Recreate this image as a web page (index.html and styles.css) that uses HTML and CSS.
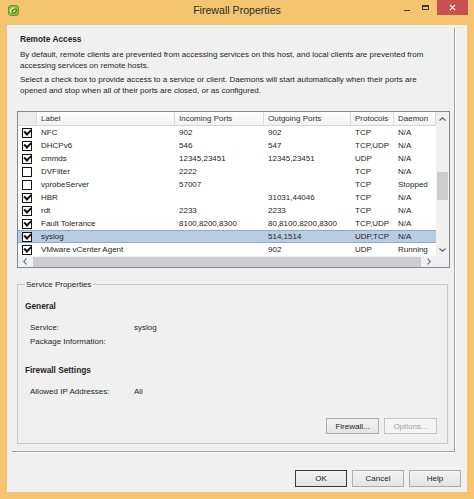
FILE: index.html
```html
<!DOCTYPE html>
<html lang="en">
<head>
    <meta charset="UTF-8">
    <title>Firewall Properties</title>
    <link rel="stylesheet" href="styles.css">
</head>
<body>
<div class="window">
    <div class="titlebar">
        <div class="tb-left">
            <svg class="app-icon" viewBox="0 0 11 11">
                <rect x="0.5" y="0.5" width="10" height="10" rx="2.5" fill="#8fbc3c" stroke="#6c9a22"/>
                <rect x="2.2" y="3.6" width="5" height="3" rx="1.5" transform="rotate(-45 4.7 5.1)" fill="none" stroke="#f3f7d8" stroke-width="1.2"/>
                <rect x="3.8" y="4.6" width="5" height="3" rx="1.5" transform="rotate(-45 6.3 6.1)" fill="none" stroke="#4e7a18" stroke-width="1.1"/>
            </svg>
        </div>
        <div class="title">Firewall Properties</div>
        <div class="controls">
            <span class="ctl-min"></span>
            <span class="ctl-max"></span>
            <span class="ctl-close">
                <svg viewBox="0 0 8 8" width="7" height="7"><path d="M1 1 L7 7 M7 1 L1 7" stroke="#fff" stroke-width="1.4"/></svg>
            </span>
        </div>
    </div>

    <div class="client">
        <div class="panel">
            <h1 class="section-title">Remote Access</h1>
            <p class="p1">By default, remote clients are prevented from accessing services on this host, and local clients are prevented from accessing services on remote hosts.</p>
            <p class="p2">Select a check box to provide access to a service or client. Daemons will start automatically when their ports are opened and stop when all of their ports are closed, or as configured.</p>

            <div class="listview">
                <div class="lv-top">
                    <div class="lv-content">
                        <div class="lv-row lv-head">
                            <span></span><span>Label</span><span>Incoming Ports</span><span>Outgoing Ports</span><span>Protocols</span><span>Daemon</span>
                        </div>
                        <div class="lv-row">
                            <span class="cb-cell"><i class="cb on"></i></span><span>NFC</span><span>902</span><span>902</span><span>TCP</span><span>N/A</span>
                        </div>
                        <div class="lv-row">
                            <span class="cb-cell"><i class="cb on"></i></span><span>DHCPv6</span><span>546</span><span>547</span><span>TCP,UDP</span><span>N/A</span>
                        </div>
                        <div class="lv-row">
                            <span class="cb-cell"><i class="cb on"></i></span><span>cmmds</span><span>12345,23451</span><span>12345,23451</span><span>UDP</span><span>N/A</span>
                        </div>
                        <div class="lv-row">
                            <span class="cb-cell"><i class="cb"></i></span><span>DVFilter</span><span>2222</span><span></span><span>TCP</span><span>N/A</span>
                        </div>
                        <div class="lv-row">
                            <span class="cb-cell"><i class="cb"></i></span><span>vprobeServer</span><span>57007</span><span></span><span>TCP</span><span>Stopped</span>
                        </div>
                        <div class="lv-row">
                            <span class="cb-cell"><i class="cb on"></i></span><span>HBR</span><span></span><span>31031,44046</span><span>TCP</span><span>N/A</span>
                        </div>
                        <div class="lv-row">
                            <span class="cb-cell"><i class="cb on"></i></span><span>rdt</span><span>2233</span><span>2233</span><span>TCP</span><span>N/A</span>
                        </div>
                        <div class="lv-row">
                            <span class="cb-cell"><i class="cb on"></i></span><span>Fault Tolerance</span><span>8100,8200,8300</span><span>80,8100,8200,8300</span><span>TCP,UDP</span><span>N/A</span>
                        </div>
                        <div class="lv-row selected">
                            <span class="cb-cell"><i class="cb on"></i></span><span>syslog</span><span></span><span>514,1514</span><span>UDP,TCP</span><span>N/A</span>
                        </div>
                        <div class="lv-row">
                            <span class="cb-cell"><i class="cb on"></i></span><span>VMware vCenter Agent</span><span></span><span>902</span><span>UDP</span><span>Running</span>
                        </div>
                    </div>
                    <div class="vscroll">
                        <div class="sb-arrow">
                            <svg viewBox="0 0 7 4" width="7" height="4"><path d="M0.5 3.5 L3.5 0.8 L6.5 3.5" fill="none" stroke="#606060" stroke-width="1.1"/></svg>
                        </div>
                        <div class="vtrack"><div class="vthumb"></div></div>
                        <div class="sb-arrow">
                            <svg viewBox="0 0 7 4" width="7" height="4"><path d="M0.5 0.5 L3.5 3.2 L6.5 0.5" fill="none" stroke="#606060" stroke-width="1.1"/></svg>
                        </div>
                    </div>
                </div>
                <div class="hscroll-row">
                    <div class="hscroll">
                        <div class="sb-arrow h">
                            <svg viewBox="0 0 4 7" width="4" height="7"><path d="M3.5 0.5 L0.8 3.5 L3.5 6.5" fill="none" stroke="#606060" stroke-width="1.1"/></svg>
                        </div>
                        <div class="hthumb"></div>
                        <div class="sb-arrow h">
                            <svg viewBox="0 0 4 7" width="4" height="7"><path d="M0.5 0.5 L3.2 3.5 L0.5 6.5" fill="none" stroke="#606060" stroke-width="1.1"/></svg>
                        </div>
                    </div>
                    <div class="corner"></div>
                </div>
            </div>

            <fieldset class="group">
                <legend>Service Properties</legend>
                <h2 class="group-title">General</h2>
                <div class="props">
                    <div class="prop"><span class="prop-label">Service:</span><span>syslog</span></div>
                    <div class="prop"><span class="prop-label">Package Information:</span><span></span></div>
                </div>
                <h2 class="group-title fw">Firewall Settings</h2>
                <div class="props">
                    <div class="prop"><span class="prop-label">Allowed IP Addresses:</span><span>All</span></div>
                </div>
                <div class="group-buttons">
                    <button class="btn">Firewall...</button>
                    <button class="btn" disabled>Options...</button>
                </div>
            </fieldset>
        </div>

        <div class="footer">
            <button class="btn big default">OK</button>
            <button class="btn big">Cancel</button>
            <button class="btn big">Help</button>
        </div>
    </div>
</div>
</body>
</html>
```

FILE: styles.css
```css
*{
    margin: 0;
    padding: 0;
    box-sizing: border-box;
}

html,body{
    width: 474px;
    height: 499px;
    overflow: hidden;
    background-color: #f5c470;
    font-family: "Liberation Sans", Arial, sans-serif;
    font-size: 8px;
    color: #252525;
}

.window{
    height: 499px;
    display: flex;
    flex-direction: column;
    background-color: #f5c470;
}

/* title bar */
.titlebar{
    height: 25px;
    display: grid;
    grid-template-columns: 1fr auto 1fr;
}

.app-icon{
    display: block;
    width: 11px;
    height: 11px;
    margin: 5px 0 0 8px;
}

.title{
    font-size: 10.6px;
    line-height: 13px;
    padding-top: 4px;
    color: #2b2b2b;
}

.controls{
    display: flex;
    justify-content: flex-end;
    align-items: flex-start;
    padding-right: 6px;
}

.ctl-min{
    width: 6px;
    height: 1px;
    margin-top: 10px;
    background-color: #3a3a3a;
}

.ctl-max{
    width: 7px;
    height: 5px;
    margin: 5px 0 0 12px;
    border: 1px solid #3a3a3a;
    border-top-width: 2px;
}

.ctl-close{
    width: 31px;
    height: 15px;
    margin-left: 8px;
    background-color: #c8504f;
    display: flex;
    align-items: center;
    justify-content: center;
}

/* client area */
.client{
    margin: 0 7px;
    height: 467px;
    background-color: #f0f0f0;
    display: flex;
    flex-direction: column;
}

.panel{
    margin: 3px 0 0 5px;
    width: 443px;
    height: 424px;
    border-right: 1px solid #a0a0a0;
    border-bottom: 1px solid #a0a0a0;
    box-shadow: 1px 1px 0 #ffffff;
    padding: 6px 0 0 8px;
}

.section-title{
    font-size: 8.3px;
    font-weight: bold;
    line-height: 11px;
}

.panel p{
    max-width: 408px;
    line-height: 11px;
}

.p1{
    margin-top: 4px;
}

.p2{
    margin-top: 3px;
}

/* list view */
.listview{
    margin: 15px 0 0 -3px;
    width: 433px;
    height: 157px;
    border: 1px solid #828790;
    background-color: #fff;
}

.lv-top{
    display: flex;
    height: 144px;
}

.lv-content{
    width: 418px;
    overflow: hidden;
}

.lv-row{
    display: grid;
    grid-template-columns: 19px 138px 89px 87px 43px 42px;
    height: 13px;
    line-height: 13px;
}

.lv-row span{
    padding-left: 4px;
    white-space: nowrap;
    overflow: hidden;
}

.lv-head{
    height: 14px;
    line-height: 13px;
    background: linear-gradient(#ffffff, #f2f2f2);
    border-bottom: 1px solid #d5d5d5;
    color: #333;
}

.lv-head span{
    border-right: 1px solid #dadada;
}

.lv-head span:first-child{
    background-color: #ececec;
}

.lv-row.selected{
    background-color: #b8cce4;
    box-shadow: inset 0 1px 0 #8eaacb, inset 0 -1px 0 #8eaacb;
}

.lv-row .cb-cell{
    display: flex;
    align-items: center;
}

.cb{
    display: block;
    position: relative;
    width: 10px;
    height: 10px;
    border: 1.5px solid #111;
    background-color: #fff;
}

.cb.on::after{
    content: "";
    position: absolute;
    left: 0.8px;
    top: 0.2px;
    width: 5.2px;
    height: 2.6px;
    border-left: 2.2px solid #111;
    border-bottom: 2.2px solid #111;
    transform: rotate(-45deg);
}

/* scroll bars */
.vscroll{
    width: 13px;
    background-color: #f0f0f0;
    display: flex;
    flex-direction: column;
}

.sb-arrow{
    height: 13px;
    display: flex;
    align-items: center;
    justify-content: center;
}

.sb-arrow.h{
    width: 14px;
    height: 11px;
}

.vtrack{
    flex: 1;
    padding-top: 47px;
}

.vthumb{
    height: 28px;
    margin: 0 1px;
    background-color: #cdcdcd;
}

.hscroll-row{
    display: flex;
    height: 11px;
}

.hscroll{
    width: 418px;
    display: flex;
    background-color: #f0f0f0;
}

.hthumb{
    flex: 1;
    margin: 1px 1px 0;
    background-color: #cdcdcd;
}

.corner{
    width: 13px;
    background-color: #f0f0f0;
}

/* service properties */
.group{
    margin: 11px 0 0 -3px;
    width: 431px;
    border: 1px solid #c9c9c9;
    padding: 0 10px 9px 7px;
}

.group legend{
    padding: 0 1px;
    line-height: 11px;
}

.group-title{
    font-size: 8.3px;
    font-weight: bold;
    line-height: 11px;
    margin-top: 11px;
}

.group-title.fw{
    margin-top: 16px;
}

.props{
    margin-top: 9px;
    padding-left: 5px;
}

.prop{
    display: flex;
    height: 14px;
    line-height: 14px;
}

.prop-label{
    width: 104px;
}

.group-buttons{
    margin-top: 19px;
    display: flex;
    justify-content: flex-end;
    gap: 5px;
}

button.btn{
    width: 53px;
    height: 16px;
    font-family: "Liberation Sans", Arial, sans-serif;
    font-size: 8px;
    color: #222;
    border: 1px solid #acacac;
    background: linear-gradient(#f2f2f2, #e4e4e4);
}

button.btn:disabled{
    color: #a3a3a3;
    border-color: #c6c6c6;
    background: #f4f4f4;
}

.footer{
    margin-top: 18px;
    padding-right: 6px;
    display: flex;
    justify-content: flex-end;
    gap: 5px;
}

button.btn.big{
    width: 52px;
    height: 17px;
}

button.btn.default{
    border-color: #3a3a3a;
}
```
